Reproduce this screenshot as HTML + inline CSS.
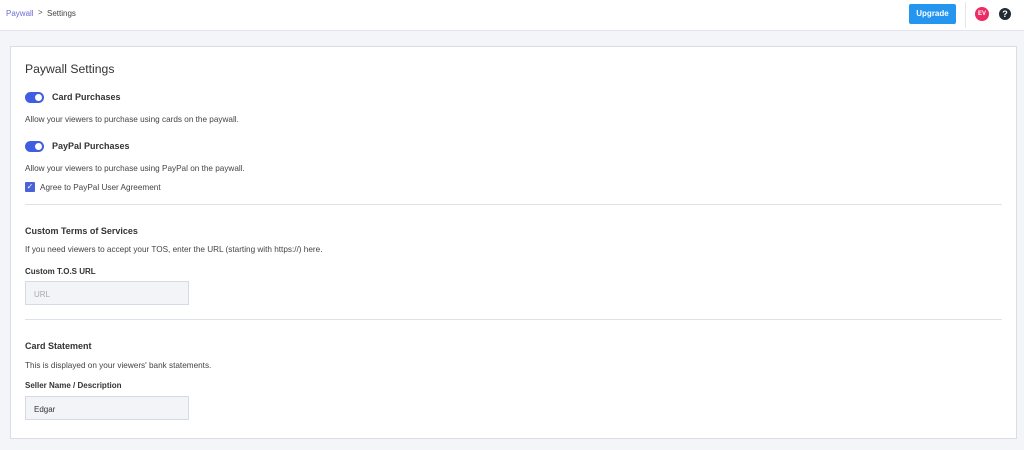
<!DOCTYPE html>
<html><head><meta charset="utf-8"><style>
*{box-sizing:border-box;margin:0;padding:0}
body{width:1024px;height:450px;background:#f3f5f9;font-family:"Liberation Sans",sans-serif;color:#333;position:relative;overflow:hidden}
.top{position:absolute;left:0;top:0;width:1024px;height:31px;background:#fff;border-bottom:1px solid #e3e6ee}
.a{position:absolute;white-space:nowrap}
.card{position:absolute;left:10px;top:46px;width:1007px;height:393px;background:#fff;border:1px solid #d8dde8}
.tog{position:absolute;width:19px;height:11px;border-radius:6px;background:#3f5ee0}
.tog:after{content:"";position:absolute;right:2px;top:2px;width:7px;height:7px;border-radius:50%;background:#fff}
.h{font-size:9px;font-weight:bold;color:#333}
.d{font-size:8.2px;color:#444}
.hr{position:absolute;left:25px;width:977px;height:1px;background:#dde1e8}
.inp{position:absolute;left:25px;width:164px;height:24px;background:#f2f4f8;border:1px solid #d6dbe3;font-size:8px;padding:8px 0 0 8px}
</style></head><body>
<div class="top">
<div class="a" style="left:6px;top:9px;font-size:8px;color:#6d6bd6">Paywall</div>
<div class="a" style="left:38px;top:8px;font-size:8px;color:#555">&gt;</div>
<div class="a" style="left:47px;top:9px;font-size:8px;color:#444">Settings</div>
<div class="a" style="left:909px;top:4px;width:47px;height:20px;background:#2496f0;border-radius:2px;color:#fff;font-size:8px;font-weight:bold;text-align:center;line-height:20px">Upgrade</div>
<div class="a" style="left:965px;top:2px;width:1px;height:26px;background:#e3e6ee"></div>
<div class="a" style="left:975px;top:7px;width:14px;height:14px;border-radius:50%;background:#ec2a63;color:#fff;font-size:6px;font-weight:bold;text-align:center;line-height:14px">EV</div>
<div class="a" style="left:999px;top:8px;width:12px;height:12px;border-radius:50%;background:#222a33;color:#fff;font-size:9px;font-weight:bold;text-align:center;line-height:12px">?</div>
</div>
<div class="card"></div>
<div class="a" style="left:25px;top:62px;font-size:12.2px;color:#333">Paywall Settings</div>
<div class="tog" style="left:25px;top:92px"></div>
<div class="a h" style="left:52px;top:92px">Card Purchases</div>
<div class="a d" style="left:25px;top:115px">Allow your viewers to purchase using cards on the paywall.</div>
<div class="tog" style="left:25px;top:141px"></div>
<div class="a h" style="left:52px;top:141px">PayPal Purchases</div>
<div class="a d" style="left:25px;top:164px">Allow your viewers to purchase using PayPal on the paywall.</div>
<div class="a" style="left:25px;top:182px;width:10px;height:10px;background:#4a63d8;border-radius:1px;color:#fff;font-size:8px;line-height:10px;text-align:center">✓</div>
<div class="a d" style="left:40px;top:183px">Agree to PayPal User Agreement</div>
<div class="hr" style="top:204px"></div>
<div class="a h" style="left:25px;top:226px">Custom Terms of Services</div>
<div class="a d" style="left:25px;top:245px">If you need viewers to accept your TOS, enter the URL (starting with https://) here.</div>
<div class="a" style="left:25px;top:267px;font-size:8px;font-weight:bold;color:#333">Custom T.O.S URL</div>
<div class="inp" style="top:281px;color:#aaa">URL</div>
<div class="hr" style="top:319px"></div>
<div class="a h" style="left:25px;top:341px">Card Statement</div>
<div class="a d" style="left:25px;top:361px">This is displayed on your viewers' bank statements.</div>
<div class="a" style="left:25px;top:381px;font-size:8px;font-weight:bold;color:#333">Seller Name / Description</div>
<div class="inp" style="top:396px;color:#333">Edgar</div>
</body></html>
